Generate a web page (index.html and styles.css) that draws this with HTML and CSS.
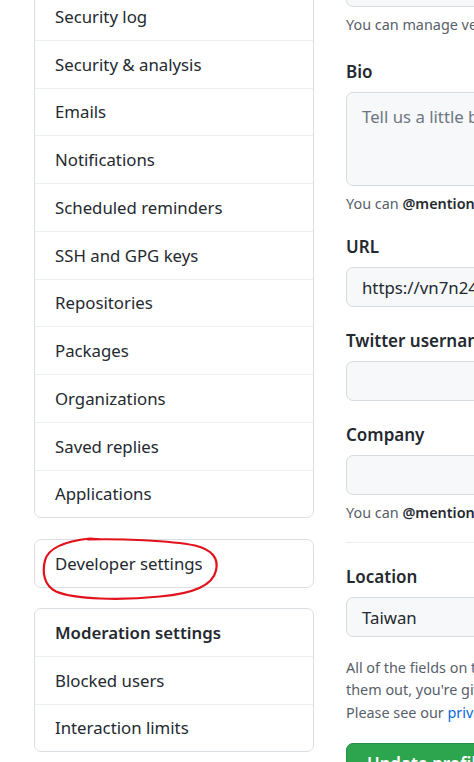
FILE: index.html
```html
<!DOCTYPE html>
<html lang="en">
<head>
<meta charset="utf-8">
<title>Settings</title>
<link rel="stylesheet" href="styles.css">
</head>
<body>
<div class="page">
  <aside class="sidebar">
    <nav class="card card-main">
      <a class="row">Security log</a>
      <a class="row">Security &amp; analysis</a>
      <a class="row">Emails</a>
      <a class="row">Notifications</a>
      <a class="row">Scheduled reminders</a>
      <a class="row">SSH and GPG keys</a>
      <a class="row">Repositories</a>
      <a class="row">Packages</a>
      <a class="row">Organizations</a>
      <a class="row">Saved replies</a>
      <a class="row">Applications</a>
    </nav>
    <nav class="card card-dev">
      <a class="row">Developer settings</a>
      <svg class="annotation" viewBox="0 0 200 80" width="200" height="80" aria-hidden="true">
        <path d="M53 8.5 C85 7.5 135 9.5 160 14.5 C177 18.5 184 27.5 181 39.5 C178 53.5 160 62.5 125 65.5 C85 69.5 40 68.5 21 60.5 C9 54.5 7 41.5 10 29.5 C13 17.5 27 10.5 55 7.5 L66 8.5" fill="none" stroke="#e3111b" stroke-width="2.2" stroke-linecap="round" stroke-linejoin="round"/>
      </svg>
    </nav>
    <nav class="card card-mod">
      <div class="row row-head">Moderation settings</div>
      <a class="row">Blocked users</a>
      <a class="row">Interaction limits</a>
    </nav>
  </aside>
  <main class="form">
    <div class="group group-first">
      <div class="input input-top"></div>
      <p class="note">You can manage verified email addresses in your email settings.</p>
    </div>
    <div class="group group-bio">
      <label class="label">Bio</label>
      <div class="input textarea"><span class="placeholder">Tell us a little bit about yourself</span></div>
      <p class="note">You can <b>@mention</b> other users and organizations to link to them.</p>
    </div>
    <div class="group group-url">
      <label class="label">URL</label>
      <div class="input"><span class="value">https://vn7n24fzkq.github.io</span></div>
    </div>
    <div class="group group-twitter">
      <label class="label">Twitter username</label>
      <div class="input"></div>
    </div>
    <div class="group group-company">
      <label class="label">Company</label>
      <div class="input"></div>
      <p class="note">You can <b>@mention</b> your company’s GitHub organization to link it.</p>
    </div>
    <hr class="divider">
    <div class="group group-location">
      <label class="label">Location</label>
      <div class="input"><span class="value">Taiwan</span></div>
    </div>
    <p class="info">All of the fields on this page are optional and can be deleted at any time, and by filling<br>them out, you're giving us consent to share this data wherever your user profile appears.<br>Please see our <a class="link">privacy statement</a> to learn more about how we use this information.</p>
    <button class="btn">Update profile</button>
  </main>
</div>
</body>
</html>
```
FILE: styles.css
```css
html, body {
  margin: 0;
  padding: 0;
  background: #ffffff;
  overflow: hidden;
}
body {
  width: 474px;
  height: 762px;
  font-family: "Noto Sans", "Open Sans", sans-serif;
  color: #24292f;
}
.page {
  display: flex;
  gap: 32px;
  padding-left: 34px;
  margin-top: -8px;
  width: 1000px;
}
.sidebar {
  width: 280px;
  flex: none;
  display: flex;
  flex-direction: column;
}
.card {
  border: 1px solid #dadfe4;
  border-radius: 7px;
  display: flex;
  flex-direction: column;
  position: relative;
}
.card-dev { margin-top: 21px; }
.card-mod { margin-top: 20px; }
.row {
  height: 46.75px;
  display: flex;
  align-items: center;
  padding-left: 20px;
  font-size: 16.8px;
  color: #24292f;
  border-top: 1px solid #eceff2;
  text-decoration: none;
}
.row:first-child { border-top: none; }
.row-head { font-weight: 600; }
.annotation {
  position: absolute;
  left: 0;
  top: -9px;
  overflow: visible;
}
.form {
  width: 640px;
  flex: none;
  display: flex;
  flex-direction: column;
}
.group { display: flex; flex-direction: column; }
.label {
  font-size: 17px;
  font-weight: 600;
  line-height: 24px;
  margin-bottom: 8px;
}
.input {
  height: 38px;
  border: 1px solid #d7dce1;
  border-radius: 7px;
  background: #f6f8fa;
  display: flex;
  align-items: center;
  padding-left: 15px;
  font-size: 16.8px;
}
.input-top { margin-top: -25px; }
.textarea {
  align-items: flex-start;
  padding-top: 12px;
  box-sizing: border-box;
  height: 94px;
}
.placeholder { color: #6e7781; }
.value { color: #24292f; }
.note {
  margin: 7px 0 0;
  font-size: 14.4px;
  line-height: 21px;
  color: #57606a;
  white-space: nowrap;
}
.note b { color: #24292f; font-weight: 600; }
.group-bio { margin-top: 24.5px; }
.group-url { margin-top: 21.5px; }
.group-twitter { margin-top: 22px; }
.group-company { margin-top: 22px; }
.divider {
  border: none;
  border-top: 1px solid #eceff2;
  margin: 19px 0 0;
  height: 0;
}
.group-location { margin-top: 22px; }
.info {
  margin: 19.5px 0 0;
  font-size: 14.4px;
  line-height: 22.5px;
  color: #57606a;
  white-space: nowrap;
}
.link { color: #0969da; text-decoration: none; }
.btn {
  margin-top: 19px;
  align-self: flex-start;
  height: 40px;
  padding: 0 20px;
  background: #2da44e;
  color: #ffffff;
  border: 1px solid #298e46;
  border-radius: 7px;
  font-family: inherit;
  font-size: 17px;
  font-weight: 600;
}
```
